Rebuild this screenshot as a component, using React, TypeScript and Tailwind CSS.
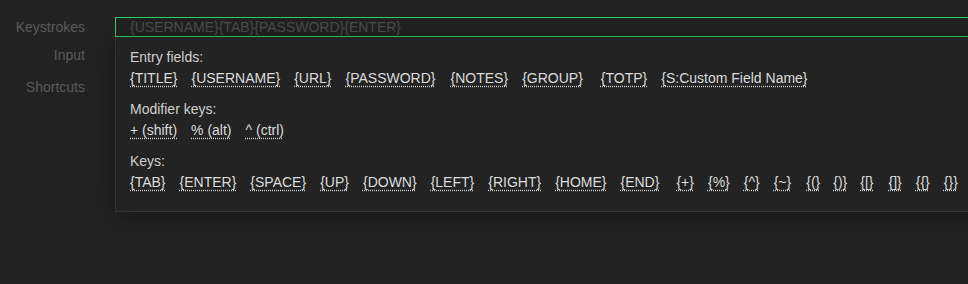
const entryFields = [
  { t: "{TITLE}", ml: "" },
  { t: "{USERNAME}", ml: "ml-[14px]" },
  { t: "{URL}", ml: "ml-[14px]" },
  { t: "{PASSWORD}", ml: "ml-[14px]" },
  { t: "{NOTES}", ml: "ml-[15px]" },
  { t: "{GROUP}", ml: "ml-[14px]" },
  { t: "{TOTP}", ml: "ml-[18px]" },
  { t: "{S:Custom Field Name}", ml: "ml-[14px]" },
];

const modifiers = [
  { t: "+ (shift)", ml: "" },
  { t: "% (alt)", ml: "ml-[14px]" },
  { t: "^ (ctrl)", ml: "ml-[14px]" },
];

const keys = [
  { t: "{TAB}", ml: "" },
  { t: "{ENTER}", ml: "ml-[14px]" },
  { t: "{SPACE}", ml: "ml-[14px]" },
  { t: "{UP}", ml: "ml-[14px]" },
  { t: "{DOWN}", ml: "ml-[14px]" },
  { t: "{LEFT}", ml: "ml-[14px]" },
  { t: "{RIGHT}", ml: "ml-[14px]" },
  { t: "{HOME}", ml: "ml-[14px]" },
  { t: "{END}", ml: "ml-[14px]" },
  { t: "{+}", ml: "ml-[17px]" },
  { t: "{%}", ml: "ml-[14px]" },
  { t: "{^}", ml: "ml-[14px]" },
  { t: "{~}", ml: "ml-[14px]" },
  { t: "{(}", ml: "ml-[15px]" },
  { t: "{)}", ml: "ml-[13px]" },
  { t: "{[}", ml: "ml-[13px]" },
  { t: "{]}", ml: "ml-[15px]" },
  { t: "{{}", ml: "ml-[14px]" },
  { t: "{}}", ml: "ml-[14px]" },
];

type Item = { t: string; ml: string };

const Group = ({ title, items }: { title: string; items: Item[] }) => (
  <div className="mb-[11px]">
    <div className="h-5 leading-5 text-[#cfcfcf]">{title}</div>
    <div className="mt-px flex h-5 whitespace-nowrap leading-5">
      {items.map((it) => (
        <span
          key={it.t}
          className={`${it.ml} cursor-pointer text-[#dcdcdc] underline decoration-dotted decoration-[#cfcfcf] underline-offset-[3px]`}
        >
          {it.t}
        </span>
      ))}
    </div>
  </div>
);

export default function App() {
  return (
    <div
      className="h-[284px] w-full overflow-hidden bg-[#222222] text-[14px]"
      style={{ fontFamily: '"Liberation Sans", Arial, sans-serif' }}
    >
      <div className="-mt-[18px] grid grid-cols-[85px_1fr] gap-x-[30px]">
        {/* row cut off at the top */}
        <div className="flex h-[20px] items-center justify-end text-[#5c5c5c]">Type</div>
        <div className="flex h-[20px] items-center whitespace-nowrap pl-[15px] text-[#5c5c5c]">
          Use default auto-type sequence, or specify custom
        </div>

        {/* Keystrokes */}
        <div className="mt-[15px] flex h-5 items-center justify-end text-[#5a5a5a]">Keystrokes</div>
        <div className="relative z-10 mt-[15px]">
          <div className="flex h-5 w-[900px] items-center border border-[#2fd267] bg-[#222222] pl-[14px] text-[#4d4d4d]">
            {"{USERNAME}{TAB}{PASSWORD}{ENTER}"}
          </div>

          {/* placeholder help popup */}
          <div className="absolute left-0 top-full w-[900px] border border-t-0 border-[#333333] bg-[#232323] px-[14px] pt-[10px] pb-[8px] shadow-[0_4px_24px_rgba(0,0,0,0.35)]">
            <Group title="Entry fields:" items={entryFields} />
            <Group title="Modifier keys:" items={modifiers} />
            <Group title="Keys:" items={keys} />
          </div>
        </div>

        <div className="mt-[8px] flex h-5 items-center justify-end text-[#5a5a5a]">Input</div>
        <div className="mt-[8px] h-5" />

        <div className="mt-[12px] flex h-5 items-center justify-end text-[#5a5a5a]">Shortcuts</div>
        <div className="mt-[12px] h-5" />
      </div>
    </div>
  );
}
